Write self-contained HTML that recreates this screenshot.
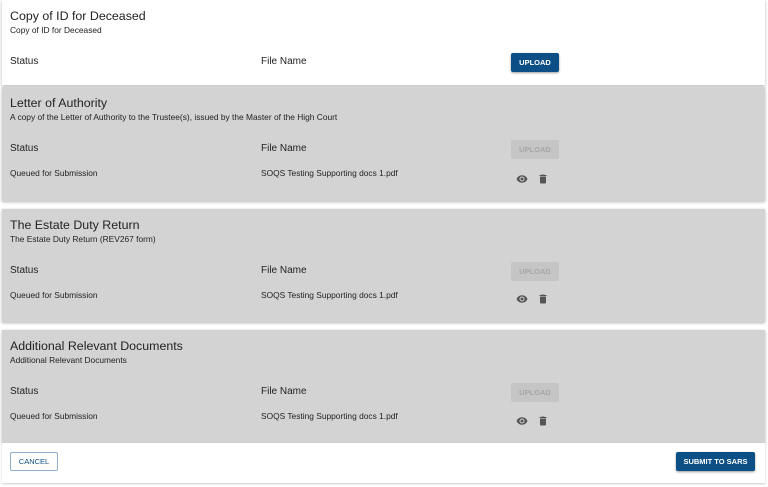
<!DOCTYPE html>
<html><head><style>
*{margin:0;padding:0;box-sizing:border-box}
body{width:768px;height:487px;background:#fff;font-family:"Liberation Sans",Arial,sans-serif;color:#222;position:relative;overflow:hidden}
.card{position:absolute;left:2px;width:763px;box-shadow:0 1px 3px rgba(0,0,0,.3)}
.t{position:absolute;left:8px;font-size:12.4px;color:#222}
.s{position:absolute;left:8px;font-size:8.4px;color:#222}
.l{position:absolute;font-size:10px;color:#222}
.q{position:absolute;font-size:8.4px;color:#222}
.btn{position:absolute;left:509px;width:48px;height:19px;border-radius:2px;font-size:7.5px;font-weight:bold;text-align:center;line-height:19px}
.ico{position:absolute}
</style></head><body>
<div class="card" style="top:0;height:85px;background:#fff">
<div class="t" style="top:9px">Copy of ID for Deceased</div>
<div class="s" style="top:25px">Copy of ID for Deceased</div>
<div class="l" style="left:8px;top:56px">Status</div>
<div class="l" style="left:259px;top:56px">File Name</div>
<div class="btn" style="top:53px;background:#0b4f86;color:#fff;box-shadow:0 1px 2px rgba(0,0,0,.4)">UPLOAD</div>
</div>
<div class="card" style="top:87px;height:114px;background:#d3d3d3">
<div class="t" style="top:9px">Letter of Authority</div>
<div class="s" style="top:25px">A copy of the Letter of Authority to the Trustee(s), issued by the Master of the High Court</div>
<div class="l" style="left:8px;top:56px">Status</div>
<div class="l" style="left:259px;top:56px">File Name</div>
<div class="q" style="left:8px;top:81px">Queued for Submission</div>
<div class="q" style="left:259px;top:81px">SOQS Testing Supporting docs 1.pdf</div>
<div class="btn" style="top:53px;background:#c5c5c5;color:#a6a6a6">UPLOAD</div>
<svg class="ico" style="left:514px;top:86px" width="12" height="12" viewBox="0 0 24 24"><path fill="#555" d="M12 4.5C7 4.5 2.7 7.6 1 12c1.7 4.4 6 7.5 11 7.5s9.3-3.1 11-7.5c-1.7-4.4-6-7.5-11-7.5zM12 17a5 5 0 110-10 5 5 0 010 10zm0-8a3 3 0 100 6 3 3 0 000-6z"/></svg>
<svg class="ico" style="left:535px;top:86px" width="12" height="12" viewBox="0 0 24 24"><path fill="#555" d="M6 19c0 1.1.9 2 2 2h8c1.1 0 2-.9 2-2V7H6v12zM19 4h-3.5l-1-1h-5l-1 1H5v2h14V4z"/></svg>
</div>
<div class="card" style="top:209px;height:113px;background:#d3d3d3">
<div class="t" style="top:9px">The Estate Duty Return</div>
<div class="s" style="top:25px">The Estate Duty Return (REV267 form)</div>
<div class="l" style="left:8px;top:56px">Status</div>
<div class="l" style="left:259px;top:56px">File Name</div>
<div class="q" style="left:8px;top:81px">Queued for Submission</div>
<div class="q" style="left:259px;top:81px">SOQS Testing Supporting docs 1.pdf</div>
<div class="btn" style="top:53px;background:#c5c5c5;color:#a6a6a6">UPLOAD</div>
<svg class="ico" style="left:514px;top:84px" width="12" height="12" viewBox="0 0 24 24"><path fill="#555" d="M12 4.5C7 4.5 2.7 7.6 1 12c1.7 4.4 6 7.5 11 7.5s9.3-3.1 11-7.5c-1.7-4.4-6-7.5-11-7.5zM12 17a5 5 0 110-10 5 5 0 010 10zm0-8a3 3 0 100 6 3 3 0 000-6z"/></svg>
<svg class="ico" style="left:535px;top:84px" width="12" height="12" viewBox="0 0 24 24"><path fill="#555" d="M6 19c0 1.1.9 2 2 2h8c1.1 0 2-.9 2-2V7H6v12zM19 4h-3.5l-1-1h-5l-1 1H5v2h14V4z"/></svg>
</div>
<div class="card" style="top:330px;height:113px;background:#d3d3d3">
<div class="t" style="top:9px">Additional Relevant Documents</div>
<div class="s" style="top:25px">Additional Relevant Documents</div>
<div class="l" style="left:8px;top:56px">Status</div>
<div class="l" style="left:259px;top:56px">File Name</div>
<div class="q" style="left:8px;top:81px">Queued for Submission</div>
<div class="q" style="left:259px;top:81px">SOQS Testing Supporting docs 1.pdf</div>
<div class="btn" style="top:53px;background:#c5c5c5;color:#a6a6a6">UPLOAD</div>
<svg class="ico" style="left:514px;top:85px" width="12" height="12" viewBox="0 0 24 24"><path fill="#555" d="M12 4.5C7 4.5 2.7 7.6 1 12c1.7 4.4 6 7.5 11 7.5s9.3-3.1 11-7.5c-1.7-4.4-6-7.5-11-7.5zM12 17a5 5 0 110-10 5 5 0 010 10zm0-8a3 3 0 100 6 3 3 0 000-6z"/></svg>
<svg class="ico" style="left:535px;top:85px" width="12" height="12" viewBox="0 0 24 24"><path fill="#555" d="M6 19c0 1.1.9 2 2 2h8c1.1 0 2-.9 2-2V7H6v12zM19 4h-3.5l-1-1h-5l-1 1H5v2h14V4z"/></svg>
</div>
<div class="card" style="top:443px;height:40px;background:#fff;box-shadow:0 1px 2px rgba(0,0,0,.2)">
<div style="position:absolute;left:8px;top:9px;width:48px;height:19px;border:1px solid #8fb0cc;border-radius:2px;font-size:7.5px;color:#0b4f86;text-align:center;line-height:17px">CANCEL</div>
<div style="position:absolute;left:674px;top:9px;width:79px;height:19px;background:#0b4f86;border-radius:2px;font-size:7.5px;font-weight:bold;color:#fff;text-align:center;line-height:19px;box-shadow:0 1px 2px rgba(0,0,0,.4)">SUBMIT TO SARS</div>
</div>
</body></html>
